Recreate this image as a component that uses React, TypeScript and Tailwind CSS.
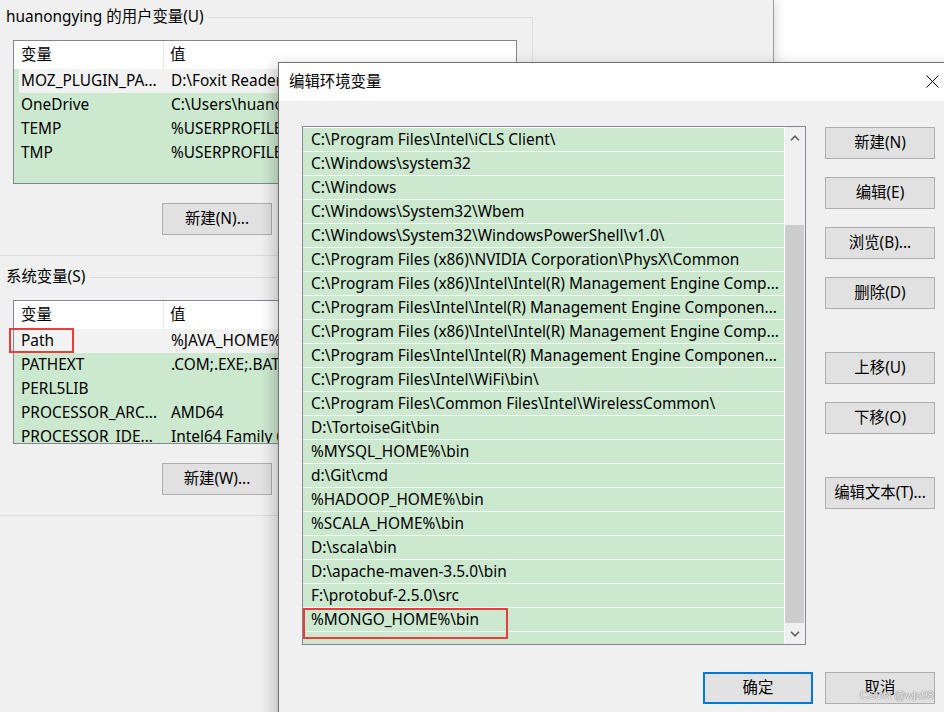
import React from 'react';

const userVars = [
  { name: 'MOZ_PLUGIN_PA...', value: 'D:\\Foxit Reader\\plugins\\', selected: true },
  { name: 'OneDrive', value: 'C:\\Users\\huanongying\\OneDrive' },
  { name: 'TEMP', value: '%USERPROFILE%\\AppData\\Local\\Temp' },
  { name: 'TMP', value: '%USERPROFILE%\\AppData\\Local\\Temp' },
];

const systemVars = [
  { name: 'Path', value: '%JAVA_HOME%\\bin;%JAVA_HOME%\\jre\\bin;', selected: true },
  { name: 'PATHEXT', value: '.COM;.EXE;.BAT;.CMD;.VBS;.VBE;.JS' },
  { name: 'PERL5LIB', value: '' },
  { name: 'PROCESSOR_ARC...', value: 'AMD64' },
  { name: 'PROCESSOR_IDE...', value: 'Intel64 Family 6 Model 142 Stepping 9' },
];

const paths = [
  'C:\\Program Files\\Intel\\iCLS Client\\',
  'C:\\Windows\\system32',
  'C:\\Windows',
  'C:\\Windows\\System32\\Wbem',
  'C:\\Windows\\System32\\WindowsPowerShell\\v1.0\\',
  'C:\\Program Files (x86)\\NVIDIA Corporation\\PhysX\\Common',
  'C:\\Program Files (x86)\\Intel\\Intel(R) Management Engine Comp...',
  'C:\\Program Files\\Intel\\Intel(R) Management Engine Componen...',
  'C:\\Program Files (x86)\\Intel\\Intel(R) Management Engine Comp...',
  'C:\\Program Files\\Intel\\Intel(R) Management Engine Componen...',
  'C:\\Program Files\\Intel\\WiFi\\bin\\',
  'C:\\Program Files\\Common Files\\Intel\\WirelessCommon\\',
  'D:\\TortoiseGit\\bin',
  '%MYSQL_HOME%\\bin',
  'd:\\Git\\cmd',
  '%HADOOP_HOME%\\bin',
  '%SCALA_HOME%\\bin',
  'D:\\scala\\bin',
  'D:\\apache-maven-3.5.0\\bin',
  'F:\\protobuf-2.5.0\\src',
  '%MONGO_HOME%\\bin',
];

interface VarRow {
  name: string;
  value: string;
  selected?: boolean;
}

function VarList({ rows, inset }: { rows: VarRow[]; inset?: boolean }) {
  return (
    <div className="w-[504px] h-[144px] border border-[#828790] bg-[#cce8cf] overflow-hidden">
      <div className="flex h-[28px] bg-white">
        <div className="w-[150px] pl-[7px] flex items-center border-r border-[#e5e5e5]">变量</div>
        <div className="flex-1 pl-[6px] flex items-center">值</div>
      </div>
      {rows.map((r) => {
        const shifted = r.selected && inset;
        return (
          <div
            key={r.name}
            className={
              'flex h-[24px] items-center ' +
              (r.selected ? (inset ? 'ml-[5px] bg-[#f2f2f2]' : 'bg-[#f2f2f2]') : '')
            }
          >
            <div
              className={
                'whitespace-nowrap overflow-hidden ' + (shifted ? 'w-[145px] pl-[2px]' : 'w-[150px] pl-[7px]')
              }
            >
              {r.name}
            </div>
            <div className="flex-1 pl-[7px] whitespace-nowrap overflow-hidden">{r.value}</div>
          </div>
        );
      })}
    </div>
  );
}

function Group({ label, children }: { label: string; children: React.ReactNode }) {
  return (
    <div className="w-[533px]">
      <div className="flex h-[20px] items-center">
        <span className="pl-[6px] pr-[4px] whitespace-nowrap">{label}</span>
        <div className="flex-1 self-end h-[10px] border-t border-r border-[#dcdcdc]" />
      </div>
      <div className="h-[229px] border-r border-b border-[#dcdcdc] pl-[13px] pt-[13px]">{children}</div>
    </div>
  );
}

function WinButton({ children, primary }: { children: React.ReactNode; primary?: boolean }) {
  return (
    <button
      className={
        'w-[110px] h-[32px] bg-[#e1e1e1] flex items-center justify-center leading-none pb-[1px] ' +
        (primary ? 'border-2 border-[#0078d7]' : 'border border-[#adadad]')
      }
    >
      {children}
    </button>
  );
}

function Chevron({ up }: { up?: boolean }) {
  return (
    <svg width="10" height="6" viewBox="0 0 10 6" fill="none">
      <path
        d={up ? 'M1 5.2 L5 1.2 L9 5.2' : 'M1 0.8 L5 4.8 L9 0.8'}
        stroke="#606060"
        strokeWidth="1.6"
      />
    </svg>
  );
}

export default function App() {
  return (
    <div className="relative w-[944px] h-[712px] overflow-hidden bg-white text-[15.4px] text-black font-['Noto_Sans','Noto_Sans_CJK_SC',sans-serif]">
      {/* background window: environment variables */}
      <div className="absolute left-0 top-0 w-[774px] h-[712px] bg-[#f0f0f0] border-r border-[#9c9c9c] shadow-[3px_0_10px_rgba(0,0,0,0.12)] pt-[7px]">
        <Group label="huanongying 的用户变量(U)">
          <VarList rows={userVars} inset />
          <div className="ml-[149px] mt-[19px]">
            <WinButton>新建(N)...</WinButton>
          </div>
        </Group>
        <div className="mt-[11px]">
          <Group label="系统变量(S)">
            <VarList rows={systemVars} />
            <div className="ml-[149px] mt-[19px]">
              <WinButton>新建(W)...</WinButton>
            </div>
          </Group>
        </div>
        {/* annotation around Path */}
        <div className="absolute left-[9px] top-[328px] w-[65px] h-[25px] border-2 border-[#ee3a3a]" />
      </div>

      {/* edit dialog */}
      <div className="absolute left-[278px] top-[62px] w-[684px] h-[660px] border border-[#6e6e6e] bg-[#f0f0f0] shadow-[-4px_4px_14px_rgba(0,0,0,0.22)]">
        <div className="flex h-[38px] bg-white items-center pb-[1px]">
          <div className="flex-1 pl-[10px]">编辑环境变量</div>
          <div className="w-[58px] h-[38px] flex items-center justify-center">
            <svg width="13" height="13" viewBox="0 0 13 13">
              <path d="M0.5 0.5 L12.5 12.5 M12.5 0.5 L0.5 12.5" stroke="#000" strokeWidth="1" />
            </svg>
          </div>
        </div>

        <div className="pl-[23px] pt-[25px]">
          <div className="flex gap-[19px]">
            <div className="relative w-[504px] h-[519px] border border-[#828790] bg-white flex">
              <div className="flex-1 mt-[1px] mr-[1px] bg-[#cce8cf]">
                {paths.map((p, i) => (
                  <div
                    key={i}
                    className="h-[24px] border-b border-[#f2f8f3] pl-[8px] flex items-center whitespace-nowrap overflow-hidden"
                  >
                    {p}
                  </div>
                ))}
              </div>
              <div className="w-[20px] bg-[#f0f0f0] flex flex-col">
                <div className="h-[21px] flex items-center justify-center">
                  <Chevron up />
                </div>
                <div className="flex-1" />
                <div className="h-[398px] mr-[1px] bg-[#cdcdcd]" />
                <div className="h-[21px] flex items-center justify-center">
                  <Chevron />
                </div>
              </div>
              {/* annotation around MONGO_HOME */}
              <div className="absolute left-0 top-[481px] w-[205px] h-[31px] border-2 border-[#ee3a3a]" />
            </div>

            <div className="flex flex-col pt-[1px]">
              <div className="flex flex-col gap-[18px]">
                <WinButton>新建(N)</WinButton>
                <WinButton>编辑(E)</WinButton>
                <WinButton>浏览(B)...</WinButton>
                <WinButton>删除(D)</WinButton>
              </div>
              <div className="flex flex-col gap-[18px] mt-[43px]">
                <WinButton>上移(U)</WinButton>
                <WinButton>下移(O)</WinButton>
              </div>
              <div className="mt-[43px]">
                <WinButton>编辑文本(T)...</WinButton>
              </div>
            </div>
          </div>

          <div className="w-[633px] mt-[27px] flex justify-end gap-[12px]">
            <WinButton primary>确定</WinButton>
            <WinButton>取消</WinButton>
          </div>
        </div>
      </div>

      {/* watermark */}
      <div className="absolute left-[860px] top-[690px] text-[11px] leading-none text-[#f4f4f4] [text-shadow:0_0_1px_#777,0_0_1px_#777] font-['Liberation_Sans',sans-serif]">
        CSDN @wjs98
      </div>
    </div>
  );
}
